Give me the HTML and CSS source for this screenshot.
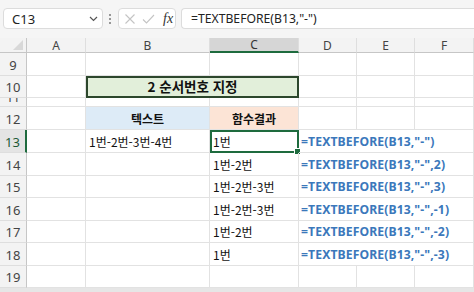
FILE: index.html
```html
<!DOCTYPE html>
<html lang="ko">
<head>
  <meta charset="UTF-8" />
  <title>TEXTBEFORE</title>
  <link rel="stylesheet" href="styles.css">
</head>
<body>

  <div class="formula-bar">
    <div class="name-box">
      <span>C13</span>
      <svg class="chev" width="9" height="6" viewBox="0 0 9 6"><path d="M1 1l3.5 3.5L8 1" fill="none" stroke="#555" stroke-width="1.2"/></svg>
    </div>
    <svg class="dots" width="4" height="12" viewBox="0 0 4 12"><circle cx="2" cy="2" r="1" fill="#777"/><circle cx="2" cy="6" r="1" fill="#777"/><circle cx="2" cy="10" r="1" fill="#777"/></svg>
    <div class="fx-box">
      <svg width="12" height="12" viewBox="0 0 12 12"><path d="M1.5 1.5l9 9M10.5 1.5l-9 9" stroke="#c4c4c4" stroke-width="1.1"/></svg>
      <svg width="13" height="12" viewBox="0 0 13 12"><path d="M1 6.5l3.5 3.5L12 2" fill="none" stroke="#c4c4c4" stroke-width="1.1"/></svg>
      <span class="fx">fx</span>
    </div>
    <div class="formula-input">=TEXTBEFORE(B13,"-")</div>
  </div>

  <div class="sheet">
    <div class="hd corner"><span class="tri"></span></div>
    <div class="hd col">A</div>
    <div class="hd col">B</div>
    <div class="hd col sel">C</div>
    <div class="hd col">D</div>
    <div class="hd col">E</div>
    <div class="hd col">F</div>

    <div class="hd row">9</div>
    <div class="c"></div><div class="c"></div><div class="c"></div><div class="c"></div><div class="c"></div><div class="c"></div>

    <div class="hd row">10</div>
    <div class="c"></div>
    <div class="c title">2 순서번호 지정</div>
    <div class="c"></div><div class="c"></div><div class="c"></div>

    <div class="hd row short"><span class="clip">11</span></div>
    <div class="c"></div><div class="c"></div><div class="c"></div><div class="c"></div><div class="c"></div><div class="c"></div>

    <div class="hd row">12</div>
    <div class="c"></div>
    <div class="c head blue">텍스트</div>
    <div class="c head peach">함수결과</div>
    <div class="c"></div><div class="c"></div><div class="c"></div>

    <div class="hd row act">13</div>
    <div class="c"></div>
    <div class="c">1번-2번-3번-4번</div>
    <div class="c active">1번<span class="handle"></span></div>
    <div class="c fn">=TEXTBEFORE(B13,"-")</div>

    <div class="hd row">14</div>
    <div class="c"></div><div class="c"></div>
    <div class="c">1번-2번</div>
    <div class="c fn">=TEXTBEFORE(B13,"-",2)</div>

    <div class="hd row">15</div>
    <div class="c"></div><div class="c"></div>
    <div class="c">1번-2번-3번</div>
    <div class="c fn">=TEXTBEFORE(B13,"-",3)</div>

    <div class="hd row">16</div>
    <div class="c"></div><div class="c"></div>
    <div class="c">1번-2번-3번</div>
    <div class="c fn">=TEXTBEFORE(B13,"-",-1)</div>

    <div class="hd row">17</div>
    <div class="c"></div><div class="c"></div>
    <div class="c">1번-2번</div>
    <div class="c fn">=TEXTBEFORE(B13,"-",-2)</div>

    <div class="hd row">18</div>
    <div class="c"></div><div class="c"></div>
    <div class="c">1번</div>
    <div class="c fn">=TEXTBEFORE(B13,"-",-3)</div>

    <div class="hd row">19</div>
    <div class="c"></div><div class="c"></div><div class="c"></div><div class="c"></div><div class="c"></div><div class="c"></div>
  </div>

  <div class="bottom-strip"></div>

</body>
</html>
```

FILE: styles.css
```css
html, body {
  margin: 0;
  padding: 0;
  background: #fff;
  font-family: "Noto Sans CJK KR", "Noto Sans", sans-serif;
  overflow: hidden;
}

.formula-bar {
  height: 38px;
  box-sizing: border-box;
  background: #f5f5f5;
  display: flex;
  align-items: flex-start;
  padding-top: 8px;
}

.name-box {
  margin-left: 3px;
  width: 100px;
  height: 21px;
  box-sizing: border-box;
  background: #fff;
  border: 1px solid #dcdcdc;
  border-radius: 4px;
  display: flex;
  align-items: center;
  justify-content: space-between;
  padding: 0 4px 0 8px;
  font-family: "Noto Sans", sans-serif;
  font-size: 13px;
  color: #222;
}

.dots {
  margin: 5px 6px 0 5px;
}

.fx-box {
  width: 58px;
  height: 21px;
  box-sizing: border-box;
  background: #fff;
  border: 1px solid #dcdcdc;
  border-radius: 4px;
  display: flex;
  align-items: center;
  gap: 6px;
  padding-left: 5px;
}

.fx {
  font-family: "Liberation Serif", serif;
  font-style: italic;
  font-size: 14px;
  color: #333;
  margin-left: 2px;
}

.formula-input {
  margin-left: 5px;
  flex: 1;
  height: 21px;
  box-sizing: border-box;
  background: #fff;
  border: 1px solid #dcdcdc;
  border-right: none;
  border-radius: 4px 0 0 4px;
  padding-left: 9px;
  font-family: "Noto Sans", sans-serif;
  font-size: 12.2px;
  line-height: 19px;
  color: #222;
}

.sheet {
  display: grid;
  grid-template-columns: 27px 59px 124px 89px 58px 58px 59px;
  grid-template-rows: 15px 23px 22px 9px 23px 23px 23px 22px 23px 22px 23px 22px;
}

.hd {
  background: #f3f3f3;
  color: #444;
  font-family: "Noto Sans", sans-serif;
  font-size: 13px;
  display: flex;
  justify-content: center;
  box-sizing: border-box;
}

.col {
  align-items: center;
  border-right: 1px solid #dedede;
  border-bottom: 1px solid #c6c6c6;
  font-size: 12px;
  line-height: 13px;
}

.col.sel {
  background: #d6d6d6;
  border-bottom: 2px solid #1e6b3e;
  color: #333;
}

.corner {
  border-right: 1px solid #c6c6c6;
  border-bottom: 1px solid #c6c6c6;
  position: relative;
}

.tri {
  position: absolute;
  right: 3px;
  bottom: 2px;
  width: 0;
  height: 0;
  border-left: 10px solid transparent;
  border-bottom: 10px solid #d8d8d8;
}

.row {
  align-items: flex-end;
  padding-bottom: 1px;
  border-right: 1px solid #c6c6c6;
  border-bottom: 1px solid #dedede;
  line-height: 18px;
}

.row.short {
  align-items: flex-start;
  padding: 0;
  overflow: hidden;
}

.clip {
  display: block;
  height: 4px;
  line-height: 4px;
  overflow: hidden;
  font-size: 12px;
}

.row.act {
  border-right: 2px solid #1e6b3e;
  color: #1e5a36;
  background: #e4e4e4;
}

.c {
  border-right: 1px solid #e2e2e2;
  border-bottom: 1px solid #e2e2e2;
  box-sizing: border-box;
  font-size: 12px;
  color: #111;
  display: flex;
  align-items: flex-end;
  padding: 0 0 1px 3px;
  line-height: 18px;
  white-space: nowrap;
  position: relative;
}

.title {
  grid-column: span 2;
  background: #e2efda;
  border: 2px solid #2c472c;
  justify-content: center;
  font-weight: bold;
  font-size: 13.5px;
  padding: 0 0 1px 0;
}

.head {
  justify-content: center;
  font-weight: bold;
  padding-left: 0;
}

.blue {
  background: #ddebf7;
}

.peach {
  background: #fce4d6;
}

.active {
  border: 2px solid #1e6b3e;
  padding-left: 1px;
  padding-bottom: 0;
}

.handle {
  position: absolute;
  right: -4px;
  bottom: -4px;
  width: 5px;
  height: 5px;
  background: #1e6b3e;
  border: 1px solid #fff;
}

.fn {
  grid-column: span 3;
  color: #3b78bb;
  font-weight: bold;
  font-family: "Noto Sans", sans-serif;
  font-size: 12.2px;
  letter-spacing: 0.1px;
  padding-left: 2px;
}

.bottom-strip {
  height: 4px;
  background: #e6e6e6;
}
```
